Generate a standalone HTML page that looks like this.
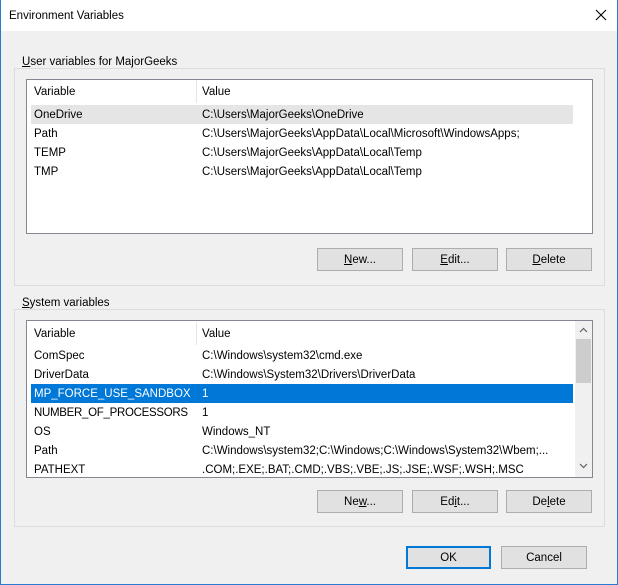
<!DOCTYPE html><html><head><style>
*{margin:0;padding:0;box-sizing:border-box}
body{width:618px;height:585px;background:#f0f0f0;font-family:"Liberation Sans",sans-serif;font-size:11.5px;color:#000;position:relative;overflow:hidden}
.title{position:absolute;left:0;top:0;width:617px;height:31px;background:#fff}
.a{position:absolute;white-space:nowrap}
.grp{position:absolute;border:1px solid #dcdcdc}
.leg{position:absolute;background:#f0f0f0;padding:0 2px}
.list{position:absolute;background:#fff;border:1px solid #828790;overflow:hidden}
.btn{position:absolute;height:23px;width:86px;background:#e1e1e1;border:1px solid #adadad;text-align:center;line-height:23px}
.row{position:absolute;left:4px;height:19px;line-height:21px;width:542px}
.row span{position:absolute;white-space:nowrap}
</style></head><body>
<div class="title"></div>
<div style="position:absolute;left:0;top:0;width:1px;height:585px;background:#2b79d0"></div>
<div style="position:absolute;right:0;top:0;width:1px;height:585px;background:#2b79d0"></div>
<div style="position:absolute;left:0;bottom:0;width:618px;height:1px;background:#2b79d0"></div>
<div class="a" style="left:9px;top:10px">Environment Variables</div>
<svg class="a" style="left:595px;top:9px" width="12" height="12"><path d="M1 1L11 11M11 1L1 11" stroke="#000" stroke-width="1.1"/></svg>

<div class="grp" style="left:14px;top:68px;width:591px;height:218px"></div>
<div class="leg a" style="left:20px;top:56px"><u>U</u>ser variables for MajorGeeks</div>
<div class="list" style="left:26px;top:79px;width:567px;height:155px">
 <div class="row" style="top:0;left:0;width:565px;height:23px;line-height:25px"><span style="left:7px">Variable</span><span style="left:175px">Value</span><div style="position:absolute;left:169px;top:0;width:1px;height:23px;background:#e5e5e5"></div></div>
 <div class="row" style="top:25px;background:#e5e5e5"><span style="left:3px">OneDrive</span><span style="left:171px">C:\Users\MajorGeeks\OneDrive</span></div>
 <div class="row" style="top:44px"><span style="left:3px">Path</span><span style="left:171px">C:\Users\MajorGeeks\AppData\Local\Microsoft\WindowsApps;</span></div>
 <div class="row" style="top:63px"><span style="left:3px">TEMP</span><span style="left:171px">C:\Users\MajorGeeks\AppData\Local\Temp</span></div>
 <div class="row" style="top:82px"><span style="left:3px">TMP</span><span style="left:171px">C:\Users\MajorGeeks\AppData\Local\Temp</span></div>
</div>
<div class="btn" style="left:317px;top:248px"><u>N</u>ew...</div>
<div class="btn" style="left:412px;top:248px"><u>E</u>dit...</div>
<div class="btn" style="left:506px;top:248px"><u>D</u>elete</div>

<div class="grp" style="left:14px;top:309px;width:591px;height:218px"></div>
<div class="leg a" style="left:20px;top:297px"><u>S</u>ystem variables</div>
<div class="list" style="left:26px;top:320px;width:567px;height:158px">
 <div class="row" style="top:1px;left:0;width:548px;height:23px;line-height:25px"><span style="left:7px">Variable</span><span style="left:175px">Value</span><div style="position:absolute;left:169px;top:0;width:1px;height:23px;background:#e5e5e5"></div></div>
 <div class="row" style="top:25px"><span style="left:3px">ComSpec</span><span style="left:171px">C:\Windows\system32\cmd.exe</span></div>
 <div class="row" style="top:44px"><span style="left:3px">DriverData</span><span style="left:171px">C:\Windows\System32\Drivers\DriverData</span></div>
 <div class="row" style="top:63px;background:#0078d7;color:#fff"><span style="left:3px">MP_FORCE_USE_SANDBOX</span><span style="left:171px">1</span></div>
 <div class="row" style="top:82px"><span style="left:3px;letter-spacing:-0.3px">NUMBER_OF_PROCESSORS</span><span style="left:171px">1</span></div>
 <div class="row" style="top:101px"><span style="left:3px">OS</span><span style="left:171px">Windows_NT</span></div>
 <div class="row" style="top:120px"><span style="left:3px">Path</span><span style="left:171px">C:\Windows\system32;C:\Windows;C:\Windows\System32\Wbem;...</span></div>
 <div class="row" style="top:139px"><span style="left:3px">PATHEXT</span><span style="left:171px">.COM;.EXE;.BAT;.CMD;.VBS;.VBE;.JS;.JSE;.WSF;.WSH;.MSC</span></div>
 <div style="position:absolute;left:548px;top:0;width:17px;height:156px;background:#f0f0f0"></div>
 <div style="position:absolute;left:549px;top:18px;width:15px;height:44px;background:#cdcdcd"></div>
 <svg style="position:absolute;left:552px;top:6px" width="9" height="6"><path d="M1 5L4.5 1.5L8 5" stroke="#606060" fill="none" stroke-width="1.2"/></svg>
 <svg style="position:absolute;left:552px;top:142px" width="9" height="6"><path d="M1 1L4.5 4.5L8 1" stroke="#606060" fill="none" stroke-width="1.2"/></svg>
</div>
<div class="btn" style="left:317px;top:490px">Ne<u>w</u>...</div>
<div class="btn" style="left:412px;top:490px">Ed<u>i</u>t...</div>
<div class="btn" style="left:506px;top:490px">De<u>l</u>ete</div>

<div class="btn" style="left:406px;top:546px;width:85px;border:2px solid #0078d7;line-height:21px">OK</div>
<div class="btn" style="left:501px;top:546px;width:86px">Cancel</div>
</body></html>
